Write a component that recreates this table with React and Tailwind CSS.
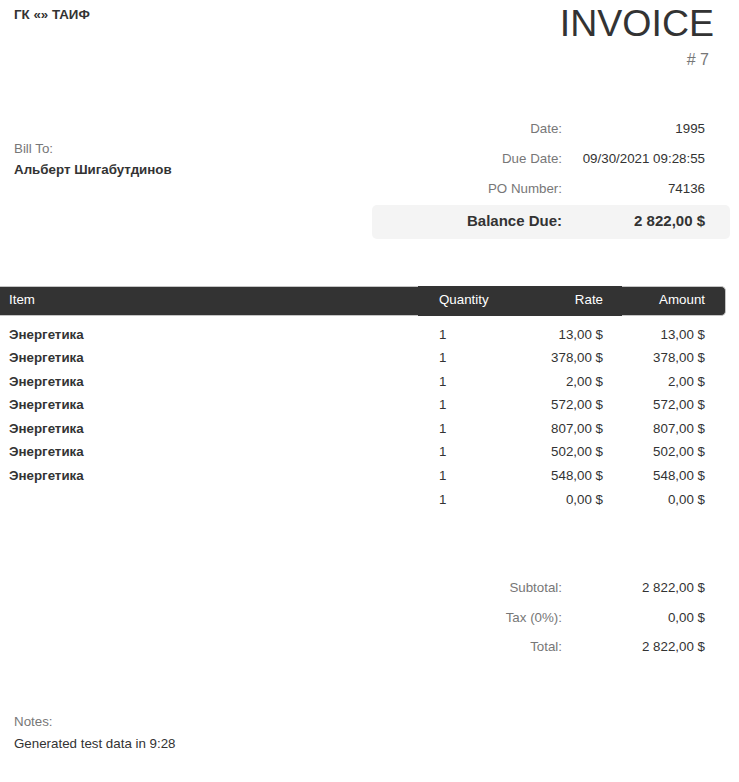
import React from 'react';

// Строки счёта
const ITEMS = [
  { name: 'Энергетика', qty: 1, rate: '13,00 $', amount: '13,00 $' },
  { name: 'Энергетика', qty: 1, rate: '378,00 $', amount: '378,00 $' },
  { name: 'Энергетика', qty: 1, rate: '2,00 $', amount: '2,00 $' },
  { name: 'Энергетика', qty: 1, rate: '572,00 $', amount: '572,00 $' },
  { name: 'Энергетика', qty: 1, rate: '807,00 $', amount: '807,00 $' },
  { name: 'Энергетика', qty: 1, rate: '502,00 $', amount: '502,00 $' },
  { name: 'Энергетика', qty: 1, rate: '548,00 $', amount: '548,00 $' },
  { name: '', qty: 1, rate: '0,00 $', amount: '0,00 $' },
];

const META = [
  { label: 'Date:', value: '1995' },
  { label: 'Due Date:', value: '09/30/2021 09:28:55' },
  { label: 'PO Number:', value: '74136' },
];

const TOTALS = [
  { label: 'Subtotal:', value: '2 822,00 $' },
  { label: 'Tax (0%):', value: '0,00 $' },
  { label: 'Total:', value: '2 822,00 $' },
];

function LabelRow({ label, value, leading }) {
  return (
    <div className={`grid grid-cols-[200px_158px] ${leading}`}>
      <span className="text-right pr-[10px] text-[#777]">{label}</span>
      <span className="text-right pr-[25px] text-[#333]">{value}</span>
    </div>
  );
}

export default function App() {
  return (
    <div
      className="w-[739px] min-h-[782px] bg-white text-[13.33px] text-[#333]"
      style={{ fontFamily: '"Liberation Sans", Arial, sans-serif' }}
    >
      {/* Header */}
      <div className="flex justify-between items-start">
        <div className="pl-[14px] pt-[6.5px] leading-[16px] font-bold">ГК «» ТАИФ</div>
        <div className="text-right">
          <div className="mt-[5px] pr-[25px] text-[37.5px] leading-none text-[#333]">INVOICE</div>
          <div className="mt-[9px] pr-[30px] text-[16px] leading-[16px] text-[#777]"># 7</div>
        </div>
      </div>

      {/* Bill to + meta */}
      <div className="mt-[46.5px] flex justify-between items-start">
        <div className="pl-[14px] pt-[24px] leading-[21px]">
          <div className="text-[#777]">Bill To:</div>
          <div className="font-bold">Альберт Шигабутдинов</div>
        </div>
        <div className="mr-[9px] w-[358px]">
          {META.map(m => (
            <LabelRow key={m.label} label={m.label} value={m.value} leading="leading-[30px]" />
          ))}
          <div className="mt-[0.5px] h-[34px] grid grid-cols-[200px_158px] bg-[#f4f4f4] rounded-[5px] leading-[31px] text-[15px] font-bold">
            <span className="text-right pr-[10px]">Balance Due:</span>
            <span className="text-right pr-[25px]">2 822,00 $</span>
          </div>
        </div>
      </div>

      {/* Items table */}
      <div className="mt-[47.5px] w-[726px]">
        <div className="flex h-[30px] text-white">
          <div className="w-[418px] bg-[#333] border-y border-[#c4c4c4] pl-[9px] leading-[26px]">Item</div>
          <div className="w-[102px] bg-[#333] pl-[21px] leading-[28px]">Quantity</div>
          <div className="w-[102px] bg-[#333] pr-[19px] text-right leading-[28px]">Rate</div>
          <div className="w-[104px] bg-[#333] border-y border-r border-[#c4c4c4] rounded-r-[5px] pr-[20px] text-right leading-[26px]">
            Amount
          </div>
        </div>
        <div className="pt-[6.6px]">
          {ITEMS.map((it, i) => (
            <div key={i} className="flex leading-[23.57px]">
              <div className="w-[418px] pl-[9px] font-bold">{it.name}</div>
              <div className="w-[102px] pl-[21px]">{it.qty}</div>
              <div className="w-[102px] pr-[19px] text-right">{it.rate}</div>
              <div className="w-[104px] pr-[21px] text-right">{it.amount}</div>
            </div>
          ))}
        </div>
      </div>

      {/* Totals */}
      <div className="mt-[62.4px] flex justify-end">
        <div className="mr-[9px] w-[358px]">
          {TOTALS.map(t => (
            <LabelRow key={t.label} label={t.label} value={t.value} leading="leading-[29.5px]" />
          ))}
        </div>
      </div>

      {/* Notes */}
      <div className="mt-[49.3px] pl-[14px] leading-[22px]">
        <div className="text-[#777]">Notes:</div>
        <div>Generated test data in 9:28</div>
      </div>
    </div>
  );
}
